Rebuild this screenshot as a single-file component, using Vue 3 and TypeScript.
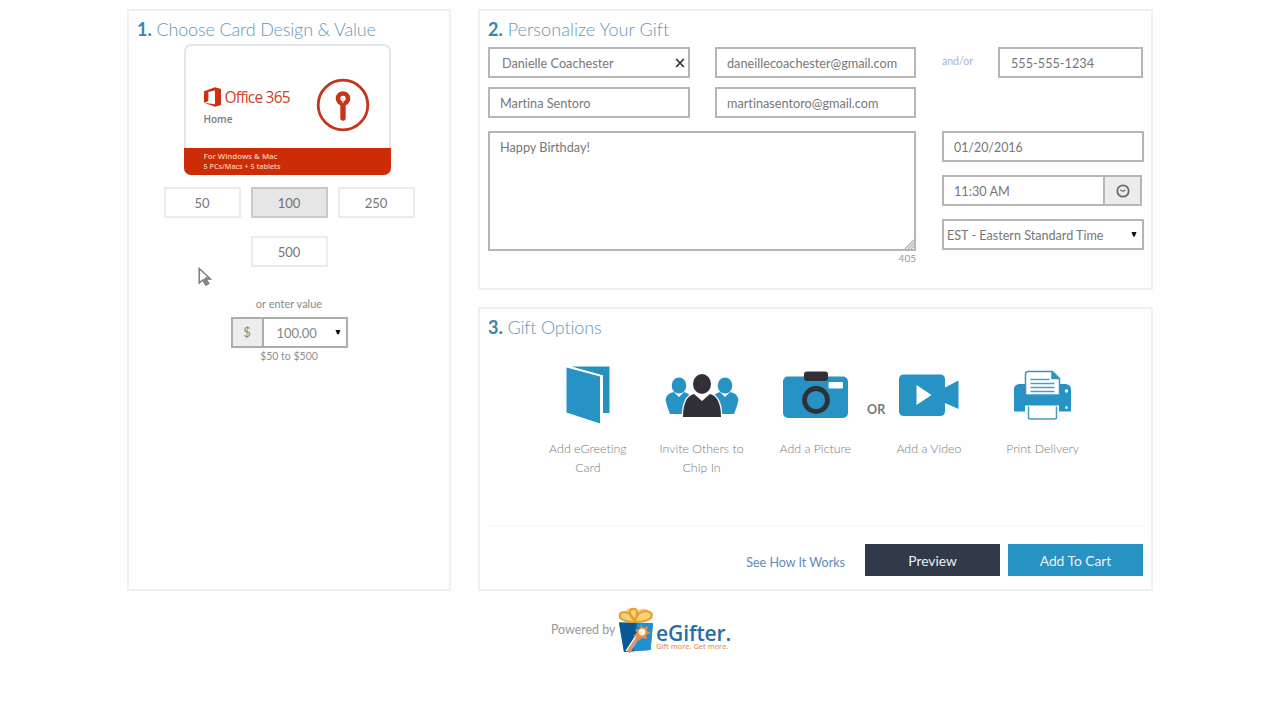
<script setup lang="ts">
import { ref } from 'vue'

const amounts: number[] = [50, 100, 250, 500]
const selected = ref<number>(100)
</script>

<template>
  <main class="page">
    <div class="columns">
      <section class="panel choose">
        <h2><b>1.</b> Choose Card Design &amp; Value</h2>
        <div class="gift-card">
          <div class="card-body">
            <div class="brand">
              <div class="office">
                <svg width="18" height="20" viewBox="0 0 18 20">
                  <path d="M0 4.3 11 .3l6 1.8v15.8l-6 1.8-11-4 11 1.5V3.4L4.3 5v9.2L0 15.7Z" fill="#cf3011" />
                </svg>
                <span>Office 365</span>
              </div>
              <div class="edition">Home</div>
            </div>
            <svg class="keyhole" width="54" height="54" viewBox="0 0 54 54" fill="none" stroke="#c6351b">
              <circle cx="27" cy="27" r="24.8" stroke-width="2.8" />
              <circle cx="27" cy="20.500" r="5" stroke-width="4.6" />
              <path d="M27 26v14" stroke-width="5.4" stroke-linecap="round" />
              <path d="M27 20v5" stroke="#f7d5cc" stroke-width="1.300" />
            </svg>
          </div>
          <div class="card-foot"><span class="platforms">For Windows &amp; Mac</span><span class="devices">5 PCs/Macs + 5 tablets</span></div>
        </div>
        <div class="amounts">
          <button v-for="a in amounts" :key="a" :class="{ active: a === selected }" @click="selected = a">{{ a }}</button>
        </div>
        <div class="or-enter">or enter value</div>
        <div class="value-box">
          <span class="currency">$</span>
          <span class="value">100.00</span>
          <svg class="caret" width="6" height="6" viewBox="0 0 6 6"><path d="M.5 0h5L3.8 4.300H2.2Z" fill="#111" /></svg>
        </div>
        <div class="range">$50 to $500</div>
      </section>

      <div class="right">
        <section class="panel personalize">
          <h2 class="wide"><b>2.</b> Personalize Your Gift</h2>
          <div class="row first">
            <div class="field name active-name">
              <span>Danielle Coachester</span>
              <svg width="10" height="10" viewBox="0 0 10 10"><path d="m1.2 1 7.6 8M8.8 1 1.2 9" stroke="#333" stroke-width="1.7" /></svg>
            </div>
            <div class="field mail"><span>daneillecoachester@gmail.com</span></div>
            <span class="andor">and/or</span>
            <div class="field phone"><span>555-555-1234</span></div>
          </div>
          <div class="row second">
            <div class="field name"><span>Martina Sentoro</span></div>
            <div class="field mail"><span>martinasentoro@gmail.com</span></div>
          </div>
          <div class="row third">
            <div class="message-col">
              <div class="message">
                <span>Happy Birthday!</span>
                <svg class="grip" width="10" height="10" viewBox="0 0 10 10"><path d="M1 10 10 1M4 10l6-6M7 10l3-3" stroke="#b4b4b4" stroke-width="1.4" /></svg>
              </div>
              <div class="counter">405</div>
            </div>
            <div class="when">
              <div class="field date"><span>01/20/2016</span></div>
              <div class="field time">
                <span>11:30 AM</span>
                <span class="clock">
                  <svg width="14" height="14" viewBox="0 0 14 14" fill="none" stroke="#6b6b6b"><circle cx="7" cy="7" r="5.700" stroke-width="1.800" /><path d="M4.200 6l2.800 1.300L9.600 6" stroke-width="1.200" /></svg>
                </span>
              </div>
              <div class="field zone">
                <span>EST - Eastern Standard Time</span>
                <svg width="6" height="6" viewBox="0 0 6 6"><path d="M.5 0h5L3.8 4.500H2.2Z" fill="#111" /></svg>
              </div>
            </div>
          </div>
        </section>

        <section class="panel options">
          <h2><b>3.</b> Gift Options</h2>
          <div class="option-row">
            <div class="option">
              <svg width="74" height="60" viewBox="0 0 74 60">
                <path d="M20 .5h38.500V47H52V9.500Z" fill="#2690bf" />
                <path d="M20 .5 52 9.500V12L16 1.500Z" fill="#fff" />
                <path d="M15.500 1.500 49 10.500V57.500L15.500 46.500Z" fill="#2693c4" />
              </svg>
              <div class="label"><span>Add eGreeting</span><span>Card</span></div>
            </div>
            <div class="option">
              <svg width="74" height="60" viewBox="0 0 74 60">
                <g fill="#2693c4">
                  <ellipse cx="14" cy="19.500" rx="7.300" ry="8" />
                  <path d="M9 26 14 31l5-5q6 2 7 5L17 48H5Q2 41 .5 34q1-7 8.500-8Z" />
                  <ellipse cx="60" cy="19.500" rx="7.300" ry="8" />
                  <path d="m55 26 5 5 5-5q7.500 1 8.500 8Q72 41 69 48H57L48 31q1-3 7-5Z" />
                </g>
                <g fill="#303036" stroke="#fff" stroke-width="2.600" paint-order="stroke">
                  <path d="M29 28 37 35l8-7q11 3 11 23H18q0-20 11-23Z" />
                  <ellipse cx="37" cy="18" rx="9" ry="10" />
                </g>
              </svg>
              <div class="label"><span>Invite Others to</span><span>Chip In</span></div>
            </div>
            <div class="option">
              <svg width="74" height="60" viewBox="0 0 74 60">
                <rect x="5" y="10.500" width="65" height="41.500" rx="5" fill="#2693c4" />
                <rect x="26" y="5.500" width="24" height="9.500" rx="3" fill="#303036" />
                <rect x="50.500" y="16" width="14.500" height="6.500" rx="1" fill="#fff" />
                <circle cx="38" cy="34" r="11.500" fill="none" stroke="#303036" stroke-width="4.800" />
              </svg>
              <div class="label"><span>Add a Picture</span></div>
            </div>
            <div class="option">
              <span class="or">OR</span>
              <svg width="74" height="60" viewBox="0 0 74 60">
                <path d="M12 8.500h36q5 0 5 5v8L66.500 14.500V43L53 37v8q0 5-5 5H12q-5 0-5-5V13.500q0-5 5-5Z" fill="#2693c4" />
                <path d="M24.500 19v20l15-10Z" fill="#fff" />
              </svg>
              <div class="label"><span>Add a Video</span></div>
            </div>
            <div class="option">
              <svg width="74" height="60" viewBox="0 0 74 60">
                <path d="M13 18h47q5 1 5 5v22.500H8V23q0-4 5-5Z" fill="#2693c4" />
                <path d="M19.500 29V8q0-2.500 3-2.500h24l7 7V29Z" fill="#fff" stroke="#3995bf" stroke-width="1.500" />
                <path d="M46 5.500v7h7" fill="#2693c4" stroke="#3995bf" stroke-width="1.500" />
                <path d="M24.500 13.500h19M24.500 17.500h24M24.500 21.500h24M24.500 25.500h24" stroke="#4e9fc6" stroke-width="1.600" />
                <path d="M20.500 41h31v12h-31Z" fill="#fff" stroke="#fff" stroke-width="3" />
                <path d="M22.500 40.500v11q0 1.500 2 1.500h24q2 0 2-1.500v-11" fill="#fff" stroke="#4a9bbf" stroke-width="1.500" />
                <circle cx="60.500" cy="25" r="1.700" fill="#fff" /><circle cx="60.500" cy="41.500" r="1.500" fill="#d3ebf5" />
              </svg>
              <div class="label"><span>Print Delivery</span></div>
            </div>
          </div>
          <div class="actions">
            <a class="how">See How It Works</a>
            <button class="preview">Preview</button>
            <button class="cart">Add To Cart</button>
          </div>
        </section>
      </div>
    </div>

    <footer>
      <span class="powered">Powered by</span>
      <svg class="gift" width="36" height="48" viewBox="0 0 36 48">
        <path d="M1 15.500 35 16l-2.500 27L6 45Z" fill="#1477b7" />
        <path d="M1 15.500 18 16v28L6 45Z" fill="#075995" />
        <path d="m20 16 15 0-2.500 27-17 1Z" fill="#2190cf" />
        <path d="M17 15Q4 16 1 11 0 3 8 4q1-4 8-3 3 0 4 2 8-3 11 1 6 4 1 9-5 3-15 2Z" fill="#f7d27c" />
        <g fill="none" stroke="#e6a030" stroke-width="2.200">
          <path d="M17 15Q7 15 2.500 11 0 5 7 5q7 1 10 10ZM17 15Q19 4 28 4q8 1 5 7-5 4-16 4ZM17 14Q9 7 13 2.500q5-2 6 2 0 4-2 9.500Z" />
        </g>
        <path d="m10 45 11-18" stroke="#cf997e" stroke-width="5" />
        <path d="m8 44 12-18" stroke="#fff" stroke-width="1.200" />
        <path d="m23 17 2 4 5-2-1 5 4 2-5 2 1 4-5-1-3 3-1-4-5-1 4-3-2-4 5 1Z" fill="#ee8b43" />
        <circle cx="24" cy="25" r="3.400" fill="#fff4dc" />
      </svg>
      <div class="wordmark"><span class="eg">eGifter.</span><span class="tag">Gift more. Get more.</span></div>
    </footer>

    <svg class="cursor" width="14" height="20" viewBox="0 0 14 20">
      <path d="M1.200 1.500v14.500l3.500-3 3 5 3-1.500-2.500-4.500h4.300Z" fill="#fff" stroke="#777" stroke-width="1.400" />
      <path d="m4.800 13 3 4.500 2.500-1.300L8 12.300h3.500L8.500 9.500Z" fill="#888" />
    </svg>
  </main>
</template>

<style>
html, body { margin: 0; background: #fefefe; }
</style>

<style scoped>
* { box-sizing: border-box; }
.page { width: 1280px; height: 720px; padding: 9px 0 0 127px; position: relative; overflow: hidden; font-family: Lato, "Liberation Sans", sans-serif; font-size: 13px; font-variant-ligatures: none; color: #777; background: #fefefe; }
span { white-space: nowrap; }
.columns { display: grid; grid-template-columns: 324px 675px; column-gap: 27px; height: 582px; }
.panel { border: 2px solid #f0f0f0; background: #fefefe; }
.right { display: flex; flex-direction: column; gap: 17px; }
h2 { margin: 0; padding-left: 8px; height: 24px; font-size: 18px; letter-spacing: -.16px; line-height: 22px; font-weight: 300; color: #6499b8; white-space: nowrap; }
h2.wide { letter-spacing: .06px; }
h2 b { font-weight: 700; font-size: 18px; color: #3487ad; letter-spacing: 0; }
button { font-family: inherit; padding: 0; }

.choose { display: flex; flex-direction: column; align-items: center; padding-top: 7px; }
.choose h2 { align-self: stretch; height: 26px; }
.gift-card { width: 207px; height: 131px; margin-right: 4px; border: 2px solid #e3e5e8; border-radius: 7px; background: #fff; display: flex; flex-direction: column; }
.card-body { flex: 1; display: flex; justify-content: space-between; padding-right: 19px; }
.brand { padding: 41px 0 0 18px; }
.office { display: flex; align-items: center; gap: 3px; height: 20px; color: #cf4129; font-family: "Open Sans", sans-serif; font-size: 15.500px; }
.office span { letter-spacing: -.78px; }
.edition { margin-top: 4px; font: 600 10px/16px "Open Sans", sans-serif; color: #777b82; }
.keyhole { margin-top: 32px; }
.card-foot { height: 27px; margin: 0 -2px -2px; padding: 3px 0 0 20px; border-radius: 0 0 7px 7px; background: #cd2d06; color: #ffc6b3; display: flex; flex-direction: column; align-items: flex-start; font: 600 7.800px/10px "Open Sans", sans-serif; }
.devices { font-size: 7.200px; }
.amounts { width: 251px; margin-top: 12px; display: flex; flex-wrap: wrap; justify-content: center; gap: 18px 10px; }
.amounts button { width: 77px; height: 31px; border: 2px solid #ebebeb; background: #fefefe; color: #777; font-size: 13px; }
.amounts button.active { background: #e6e6e6; border-color: #cacaca; color: #707070; }
.or-enter { margin-top: 30px; height: 14px; line-height: 14px; font-size: 11px; color: #8b8b8b; }
.value-box { margin-top: 6px; width: 117px; height: 31px; border: 2px solid #adadad; display: flex; align-items: center; font-size: 13px; color: #888; }
.currency { width: 31px; height: 27px; line-height: 27px; border-right: 2px solid #adadad; background: #ededed; text-align: center; }
.value { padding-left: 13px; letter-spacing: -.1px; }
.caret { margin-left: auto; margin-right: 5px; }
.range { margin-top: 1px; height: 14px; line-height: 14px; font-size: 10.500px; color: #909090; }

.personalize { height: 281px; padding: 7px 8px 0; }
.right h2 { padding-left: 0; }
.row { display: flex; }
.field { height: 31px; border: 2px solid #b6b6b6; background: #fff; display: flex; align-items: center; padding-left: 10px; font-size: 12.700px; }
.first { margin-top: 5px; }
.second { margin-top: 9px; }
.third { margin-top: 13px; gap: 26px; }
.name { width: 202px; margin-right: 25px; flex: none; }
.mail { width: 201px; flex: none; }
.active-name { justify-content: space-between; padding: 0 3px 0 12px; }
.andor { width: 31px; flex: none; margin: 8px 25px 0 26px; font-size: 10.500px; color: #a6b4d2; }
.phone { width: 145px; padding-left: 11px; }
.message-col { width: 428px; flex: none; }
.message { height: 120px; border: 2px solid #b6b6b6; padding: 6px 10px; position: relative; font-size: 12.700px; }
.grip { position: absolute; right: 0; bottom: 0; }
.counter { margin-top: 1px; text-align: right; font-size: 10px; line-height: 13px; color: #999; }
.when { width: 202px; flex: none; display: flex; flex-direction: column; gap: 13px; }
.date { font-size: 12.400px; padding-top: 1px; }
.time { width: 200px; justify-content: space-between; padding-left: 10px; }
.clock { width: 37px; height: 27px; border-left: 2px solid #b6b6b6; background: #ececec; display: flex; align-items: center; justify-content: center; }
.zone { justify-content: space-between; padding: 2px 5px 0 3px; font-size: 12.600px; }
.zone svg { margin-bottom: 2px; }

.options { height: 284px; padding: 7px 8px 0; display: flex; flex-direction: column; }
.option-row { display: flex; padding-left: 43px; margin-top: 26px; height: 161px; border-bottom: 2px solid #f8f8f8; }
.option { width: 113.700px; flex: none; position: relative; display: flex; flex-direction: column; align-items: center; }
.option > svg { height: 60px; overflow: visible; }
.label { display: flex; flex-direction: column; align-items: center; margin-top: 14px; line-height: 18.500px; font-size: 12.400px; font-weight: 300; color: #7c7c7c; }
.or { position: absolute; left: -5px; top: 35px; font-weight: 700; font-size: 12.500px; line-height: 18px; color: #777; }
.actions { display: flex; justify-content: flex-end; align-items: flex-start; margin-top: 17px; height: 33px; }
.how { font-size: 12.500px; line-height: 15px; color: #5f8abb; margin-right: 20px; padding-top: 11px; white-space: nowrap; }
.actions button { width: 135px; height: 32px; border: 0; color: #eaf1f7; font-size: 13.800px; padding-top: 1px; }
.actions .preview { background: #303a48; margin-right: 8px; }
.actions .cart { background: #2892c3; }

footer { display: flex; align-items: flex-start; margin: 16px 0 0 424px; }
.powered { width: 67px; padding-top: 15px; line-height: 16px; font-size: 12.400px; color: #999; }
.wordmark { display: flex; flex-direction: column; align-items: flex-start; padding: 14px 0 0 2px; }
.eg { font: 600 21px/24px "Open Sans", sans-serif; letter-spacing: -.1px; color: #286fa5; }
.tag { font: 600 7.300px/8px "Open Sans", sans-serif; color: #e0a26c; margin-top: -3px; }
.cursor { position: absolute; left: 198px; top: 267px; }
</style>
